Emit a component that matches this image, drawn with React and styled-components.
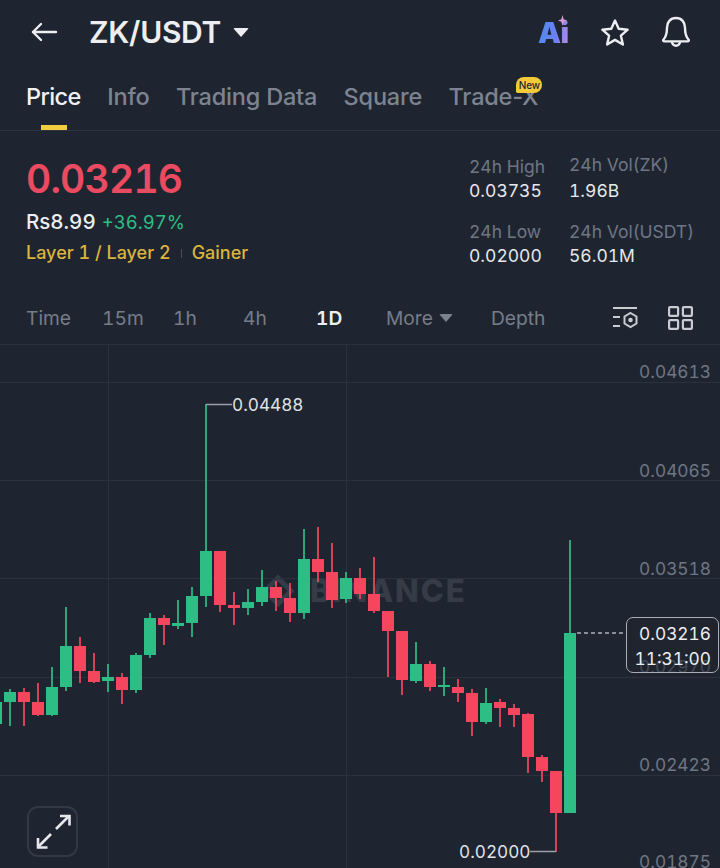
import styled, { createGlobalStyle } from "styled-components";

const GlobalStyle = createGlobalStyle`
  * { box-sizing: border-box; }
  html, body { margin: 0; padding: 0; background: #1f2530; }
  body { font-family: Inter, "Noto Sans", sans-serif; font-variant-numeric: tabular-nums; }
`;

const GREEN = "#2ebd85";
const RED = "#f6465d";

// x center, wick top, body top, body bottom, wick bottom, up?
const candles = [
  [-4, 692, 702, 724, 726, 1],
  [10, 689, 692, 702, 726, 1],
  [24, 688, 692, 702, 726, 0],
  [38, 683, 702, 715, 716, 0],
  [52, 667, 687, 715, 716, 1],
  [66, 607, 646, 687, 691, 1],
  [80, 637, 646, 671, 683, 0],
  [94, 653, 671, 682, 683, 0],
  [108, 664, 677, 681, 692, 1],
  [122, 673, 677, 690, 704, 0],
  [136, 653, 655, 690, 693, 1],
  [150, 613, 618, 655, 658, 1],
  [164, 615, 618, 625, 645, 0],
  [178, 600, 623, 626, 629, 1],
  [192, 587, 596, 623, 637, 1],
  [206, 404, 551, 596, 607, 1],
  [220, 551, 551, 605, 612, 0],
  [234, 592, 605, 608, 625, 0],
  [248, 589, 602, 608, 615, 1],
  [262, 570, 587, 602, 606, 1],
  [276, 581, 587, 598, 611, 0],
  [290, 583, 598, 613, 622, 0],
  [304, 529, 559, 613, 619, 1],
  [318, 527, 559, 572, 582, 0],
  [332, 543, 572, 600, 608, 0],
  [346, 572, 578, 599, 603, 1],
  [360, 568, 578, 594, 599, 0],
  [374, 557, 594, 611, 613, 0],
  [388, 611, 611, 631, 677, 0],
  [402, 631, 631, 680, 695, 0],
  [416, 642, 664, 681, 683, 1],
  [430, 661, 664, 687, 691, 0],
  [444, 667, 685, 687, 696, 1],
  [458, 679, 687, 693, 702, 0],
  [472, 689, 693, 722, 736, 0],
  [486, 688, 703, 722, 724, 1],
  [500, 699, 702, 708, 727, 0],
  [514, 704, 708, 715, 727, 0],
  [528, 713, 714, 757, 773, 0],
  [542, 755, 757, 771, 782, 0],
  [556, 771, 771, 813, 852, 0],
  [570, 540, 633, 813, 813, 1],
];

const gridRows = [382, 480, 578, 677, 775];
const gridCols = [108, 346];

const axis = [
  ["0.04613", 361],
  ["0.04065", 460],
  ["0.03518", 558],
  ["0.02970", 656],
  ["0.02423", 754],
  ["0.01875", 851],
];

const tabs = ["Price", "Info", "Trading Data", "Square", "Trade-X"];
const frames = ["Time", "15m", "1h", "4h", "1D", "More", "Depth"];

export default function App() {
  return (
    <Page>
      <GlobalStyle />
      <Header>
        <BackIcon width="28" height="22" viewBox="0 0 28 22" fill="none" stroke="#eceef1" strokeWidth="2.4" strokeLinecap="round" strokeLinejoin="round">
          <path d="M26 11H3" />
          <path d="M11 3l-8 8 8 8" />
        </BackIcon>
        <Title>ZK/USDT</Title>
        <Caret $size={7} $color="#eceef1" />
        <HeaderIcons>
          <AiMark>
            <AiText>Ai</AiText>
            <AiSpark width="9" height="11" viewBox="0 0 9 11">
              <path d="M4.5 0l1.2 4.2L9 5.500 5.700 6.800 4.500 11 3.300 6.800 0 5.500l3.300-1.300z" fill="#d79ad8" />
            </AiSpark>
          </AiMark>
          <svg width="30" height="29" viewBox="0 0 30 29" fill="none" stroke="#eceef1" strokeWidth="2.400" strokeLinejoin="round">
            <path d="M15 2.500l3.700 8.300 9 .9-6.800 6 2 8.800-7.900-4.600-7.900 4.600 2-8.800-6.800-6 9-.9z" />
          </svg>
          <svg width="32" height="32" viewBox="0 0 32 32" fill="none" stroke="#eceef1" strokeWidth="2.400" strokeLinecap="round" strokeLinejoin="round">
            <path d="M16 2c-5.800 0-9 4.500-9 9.500 0 6-1 9.500-3.500 12-.8.900-.2 1.900.9 1.900h23.200c1.100 0 1.700-1 .9-1.900-2.500-2.500-3.500-6-3.500-12C25 6.500 21.800 2 16 2z" />
            <path d="M12 26.500c.6 2 2.100 3.200 4 3.200s3.400-1.200 4-3.200" />
          </svg>
        </HeaderIcons>
      </Header>

      <TabBar>
        {tabs.map((t, i) => (
          <Tab key={t} $active={i === 0}>
            {t}
            {t === "Trade-X" && <NewBadge>New</NewBadge>}
          </Tab>
        ))}
      </TabBar>

      <Summary>
        <PriceBlock>
          <LastPrice>0.03216</LastPrice>
          <FiatRow>
            <Fiat>Rs8.99</Fiat>
            <Change>+36.97%</Change>
          </FiatRow>
          <TagRow>
            <span>Layer 1 / Layer 2</span>
            <TagDivider />
            <span>Gainer</span>
          </TagRow>
        </PriceBlock>
        <Stats>
          <Stat>
            <StatLabel $lift={0}>24h High</StatLabel>
            <StatValue>0.03735</StatValue>
          </Stat>
          <Stat>
            <StatLabel $lift={2}>24h Vol(ZK)</StatLabel>
            <StatValue>1.96B</StatValue>
          </Stat>
          <Stat>
            <StatLabel $lift={0}>24h Low</StatLabel>
            <StatValue>0.02000</StatValue>
          </Stat>
          <Stat>
            <StatLabel $lift={0}>24h Vol(USDT)</StatLabel>
            <StatValue>56.01M</StatValue>
          </Stat>
        </Stats>
      </Summary>

      <FrameBar>
        <FrameGrid>
          {frames.map((f) => (
            <Frame key={f} $active={f === "1D"}>
              {f}
              {f === "More" && <Caret $size={6} $color="#7b828e" />}
            </Frame>
          ))}
        </FrameGrid>
        <FrameIcons>
          <svg width="26" height="24" viewBox="0 0 26 24" fill="none" stroke="#c9ccd2" strokeWidth="2">
            <path d="M1 2h24" />
            <path d="M1 11h7M1 20h7" />
            <path d="M18.500 7l6 3.500v7l-6 3.500-6-3.500v-7z" />
            <circle cx="18.500" cy="14" r="1.300" fill="#c9ccd2" />
          </svg>
          <svg width="25" height="24" viewBox="0 0 25 24" fill="none" stroke="#c9ccd2" strokeWidth="2.200">
            <rect x="1.100" y="1.100" width="9" height="8.800" rx="1" />
            <rect x="14.900" y="1.100" width="9" height="8.800" rx="1" />
            <rect x="1.100" y="14.100" width="9" height="8.800" rx="1" />
            <rect x="14.900" y="14.100" width="9" height="8.800" rx="1" />
          </svg>
        </FrameIcons>
      </FrameBar>

      <Chart>
        <Watermark>
          <svg width="34" height="34" viewBox="0 0 34 34" fill="none" stroke="#353c47" strokeWidth="5">
            <path d="M17 4L30 17 17 30 4 17z" />
          </svg>
          <WatermarkText>BINANCE</WatermarkText>
        </Watermark>

        {axis.map(([label, top]) => (
          <AxisLabel key={label} style={{ top: top - 345 }}>{label}</AxisLabel>
        ))}

        <ChartSvg viewBox="0 345 720 523">
          {gridRows.map((y) => (
            <line key={y} x1="0" x2="720" y1={y + 0.5} y2={y + 0.5} stroke="#2b323d" strokeWidth="1" />
          ))}
          {gridCols.map((x) => (
            <line key={x} x1={x + 0.5} x2={x + 0.5} y1="345" y2="868" stroke="#2b323d" strokeWidth="1" />
          ))}
          {candles.map(([x, wt, bt, bb, wb, up]) => {
            const c = up ? GREEN : RED;
            return (
              <g key={x}>
                <rect x={x - 1} y={wt} width="2" height={wb - wt} fill={c} opacity="0.85" />
                <rect x={x - 6} y={bt} width="12" height={bb - bt} fill={c} />
              </g>
            );
          })}
          <path d="M206 404.500H232" stroke="#9a9fa8" strokeWidth="1.500" fill="none" />
          <path d="M530 851.500H556" stroke="#9a9fa8" strokeWidth="1.500" fill="none" />
          <line x1="577" x2="626" y1="633" y2="633" stroke="#aeb2b9" strokeWidth="1.500" strokeDasharray="4 3" />
        </ChartSvg>

        <HighLabel>0.04488</HighLabel>
        <LowLabel>0.02000</LowLabel>

        <LiveBox>
          <span>0.03216</span>
          <span>11:31:00</span>
        </LiveBox>

        <ExpandButton>
          <svg width="36" height="36" viewBox="0 0 36 36" fill="none" stroke="#e6e8eb" strokeWidth="2.600">
            <path d="M21 15L34 2" />
            <path d="M25 2h9.500v9.500" />
            <path d="M16 20L3 33" />
            <path d="M3 24v9.500h9.500" />
          </svg>
        </ExpandButton>
      </Chart>
    </Page>
  );
}

const Page = styled.div`
  width: 720px;
  height: 868px;
  background: #1f2530;
  display: flex;
  flex-direction: column;
  overflow: hidden;
  color: #eceef1;
`;

const Header = styled.div`
  height: 64px;
  display: flex;
  align-items: center;
  padding: 0 28px 0 30px;
`;

const BackIcon = styled.svg`
  margin-right: 31px;
`;

const Title = styled.div`
  font-size: 30px;
  font-weight: 600;
  letter-spacing: -0.3px;
  margin-right: 12px;
`;

const Caret = styled.span`
  display: inline-block;
  width: 0;
  height: 0;
  border-left: ${(p) => p.$size + 1}px solid transparent;
  border-right: ${(p) => p.$size + 1}px solid transparent;
  border-top: ${(p) => p.$size + 2}px solid ${(p) => p.$color};
  border-radius: 2px;
  vertical-align: middle;
`;

const HeaderIcons = styled.div`
  margin-left: auto;
  display: flex;
  align-items: center;
  gap: 30px;
`;

const AiMark = styled.div`
  position: relative;
  width: 32px;
  height: 30px;
`;

const AiText = styled.span`
  position: absolute;
  left: 0;
  bottom: -3px;
  font-size: 29px;
  font-weight: 900;
  letter-spacing: -0.5px;
  background: linear-gradient(100deg, #4a8cf2 0%, #6f7ff2 60%, #c08fe0 100%);
  -webkit-background-clip: text;
  background-clip: text;
  color: transparent;
`;

const AiSpark = styled.svg`
  position: absolute;
  right: 3px;
  top: -2px;
`;

const TabBar = styled.div`
  height: 67px;
  padding: 0 0 0 26px;
  display: flex;
  gap: 26.500px;
  border-bottom: 1px solid #2d343f;
`;

const Tab = styled.div`
  position: relative;
  height: 66px;
  padding-top: 18px;
  font-size: 23.500px;
  line-height: 30px;
  font-weight: 500;
  font-variant-numeric: normal;
  letter-spacing: ${(p) => (p.$active ? "-0.6px" : "-0.2px")};
  color: ${(p) => (p.$active ? "#f0f1f3" : "#7d8490")};

  &::after {
    content: "";
    display: ${(p) => (p.$active ? "block" : "none")};
    position: absolute;
    left: 15px;
    bottom: 0;
    width: 26px;
    height: 5px;
    background: #f0cc3f;
  }
`;

const NewBadge = styled.span`
  position: absolute;
  right: -4px;
  top: 13px;
  width: 26px;
  height: 16px;
  border-radius: 9px 9px 9px 2px;
  background: #f3cb3a;
  color: #1f2530;
  font-size: 10px;
  font-weight: 500;
  line-height: 16px;
  text-align: center;
  letter-spacing: -0.2px;
`;

const Summary = styled.div`
  height: 164px;
  padding: 20px 0 0 26px;
  display: flex;
  justify-content: space-between;
`;

const PriceBlock = styled.div`
  display: flex;
  flex-direction: column;
`;

const LastPrice = styled.div`
  font-size: 39px;
  line-height: 56px;
  font-weight: 600;
  letter-spacing: -0.8px;
  color: #ea4b60;
`;

const FiatRow = styled.div`
  display: flex;
  align-items: baseline;
  gap: 6px;
  margin-top: 1px;
  line-height: 28px;
`;

const Fiat = styled.span`
  font-size: 20.500px;
  font-weight: 500;
  color: #eceef1;
`;

const Change = styled.span`
  font-size: 18.500px;
  font-weight: 400;
  color: #2ebd85;
`;

const TagRow = styled.div`
  display: flex;
  align-items: center;
  margin-top: 4px;
  font-size: 18px;
  line-height: 26px;
  font-weight: 500;
  color: #dcb33c;
`;

const TagDivider = styled.i`
  display: block;
  width: 1px;
  height: 9px;
  margin: 0 10px;
  background: #4a4f57;
`;

const Stats = styled.div`
  width: 251px;
  display: grid;
  grid-template-columns: 100px 151px;
  grid-auto-rows: 64.500px;
  align-content: start;
  margin-top: 3px;
`;

const Stat = styled.div`
  display: flex;
  flex-direction: column;
`;

const StatLabel = styled.span`
  font-size: 17.500px;
  line-height: 25px;
  color: #6f7683;
  transform: translateY(${(p) => -p.$lift}px);
`;

const StatValue = styled.span`
  font-size: 17.500px;
  line-height: 24px;
  color: #e6e8eb;
`;

const FrameBar = styled.div`
  height: 50px;
  padding: 0 27px 4px 26px;
  display: flex;
  align-items: center;
  justify-content: space-between;
  border-bottom: 1px solid #2a313c;
`;

const FrameGrid = styled.div`
  display: grid;
  grid-template-columns: 76px 71px 70px 73px 70px 105px 60px;
`;

const Frame = styled.div`
  display: flex;
  align-items: center;
  gap: 6px;
  font-size: 19.200px;
  line-height: 26px;
  font-weight: ${(p) => (p.$active ? 600 : 400)};
  color: ${(p) => (p.$active ? "#eceef1" : "#767d89")};
`;

const FrameIcons = styled.div`
  display: flex;
  align-items: center;
  gap: 30px;
`;

const Chart = styled.div`
  position: relative;
  flex: 1;
  overflow: hidden;
`;

const ChartSvg = styled.svg`
  position: absolute;
  inset: 0;
  width: 720px;
  height: 523px;
`;

const Watermark = styled.div`
  position: absolute;
  left: 261px;
  top: 227px;
  display: flex;
  align-items: center;
  gap: 15px;
`;

const WatermarkText = styled.span`
  font-size: 31px;
  font-weight: 800;
  letter-spacing: 2px;
  color: #353c47;
`;

const AxisLabel = styled.span`
  position: absolute;
  right: 9px;
  font-size: 17.300px;
  line-height: 22px;
  color: #6f7683;
`;

const HighLabel = styled.span`
  position: absolute;
  left: 232px;
  top: 49px;
  font-size: 17.200px;
  line-height: 22px;
  color: #dfe1e5;
`;

const LowLabel = styled.span`
  position: absolute;
  left: 459px;
  top: 496px;
  font-size: 17.200px;
  line-height: 22px;
  color: #dfe1e5;
`;

const LiveBox = styled.div`
  position: absolute;
  left: 626px;
  top: 272px;
  width: 93px;
  height: 56px;
  padding: 3px 7px 0 0;
  display: flex;
  flex-direction: column;
  align-items: flex-end;
  border: 1px solid #a9adb4;
  border-radius: 7px;
  background: rgba(31, 37, 48, 0.55);
  font-size: 17.300px;
  line-height: 25px;
  color: #eceef1;
`;

const ExpandButton = styled.div`
  position: absolute;
  left: 27px;
  top: 461px;
  width: 51px;
  height: 51px;
  display: flex;
  align-items: center;
  justify-content: center;
  border: 2px solid #323944;
  border-radius: 11px;
`;
